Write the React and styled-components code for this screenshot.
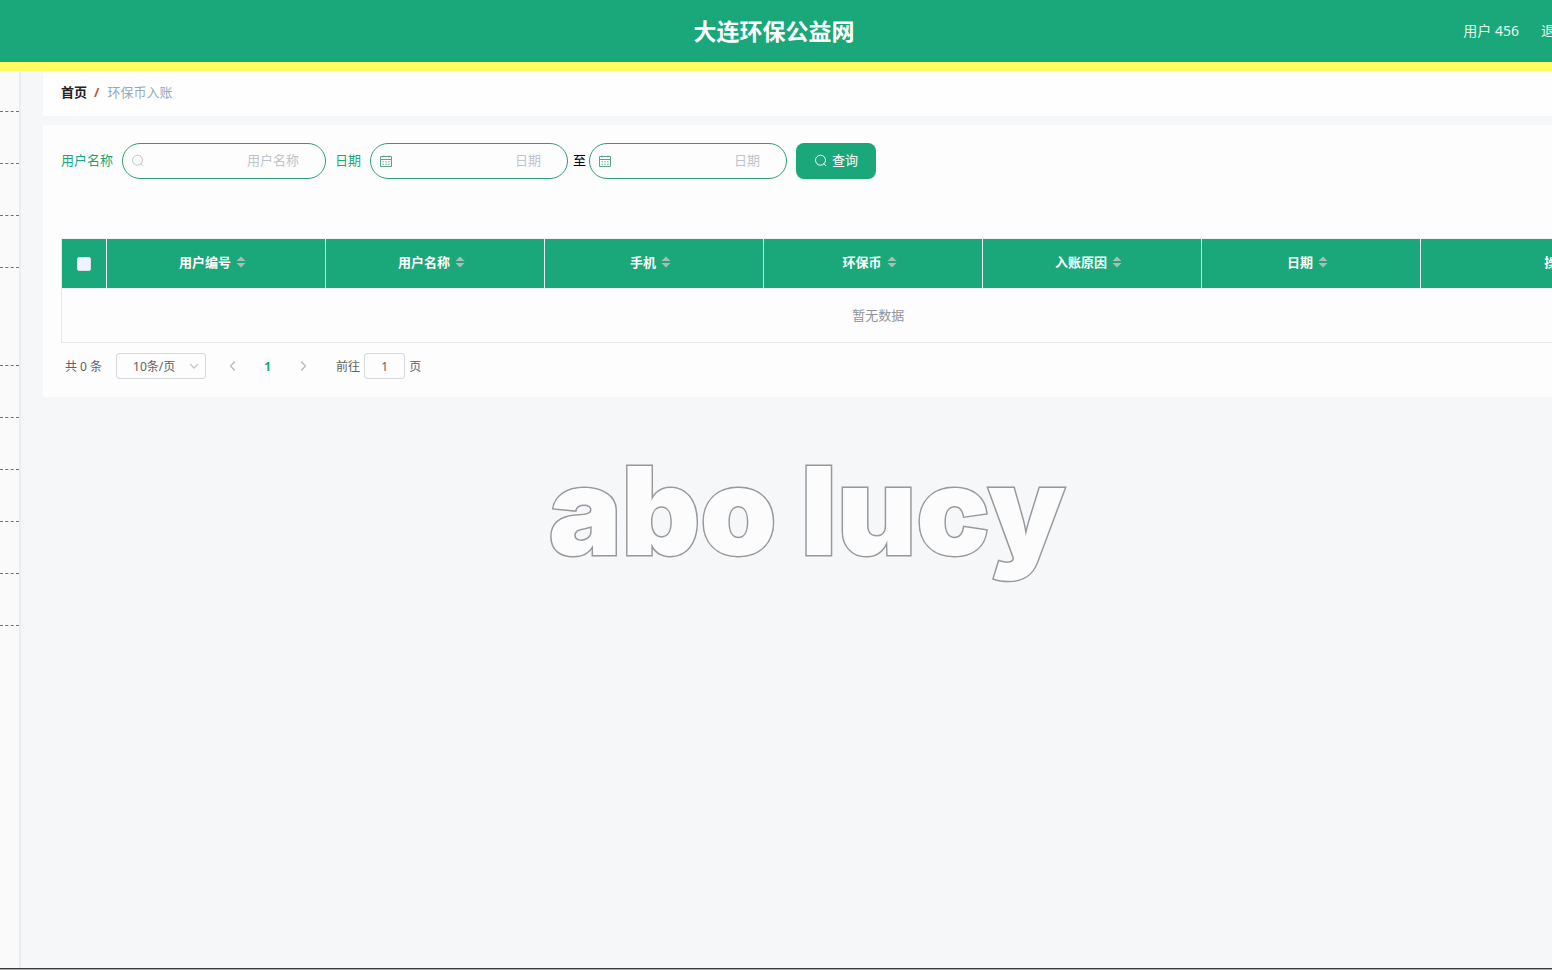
import React, { useState } from "react";
import styled, { createGlobalStyle } from "styled-components";

const columns = ["用户编号", "用户名称", "手机", "环保币", "入账原因", "日期"];
const menuGroups = [
  { id: "home" },
  { id: "profile" },
  { id: "users" },
  { id: "coins" },
  { id: "records", tall: true },
  { id: "goods" },
  { id: "orders" },
  { id: "news" },
  { id: "forum" },
  { id: "system" }
];

function SearchIcon() {
  return (
    <svg width="14" height="14" viewBox="0 0 14 14" fill="none" stroke="currentColor">
      <circle cx="6.5" cy="6.2" r="5" />
      <path d="M10 9.8 L12 11.8" strokeLinecap="round" />
    </svg>
  );
}

function CalendarIcon() {
  return (
    <svg width="14" height="14" viewBox="0 0 14 14" fill="none" stroke="currentColor">
      <path d="M1.5 2.5h11v10h-11z M1.5 5.5h11" />
      <path d="M4 1.5v2 M10 1.5v2" />
      <path d="M3.5 7.8h7 M3.5 10.3h7" strokeDasharray="1.4 1.4" />
    </svg>
  );
}

function Chevron({ d }) {
  return (
    <svg width="12" height="12" viewBox="0 0 12 12" fill="none" stroke="currentColor">
      <path d={d} strokeLinecap="round" strokeLinejoin="round" strokeWidth="1.2" />
    </svg>
  );
}

function SortCaret() {
  return (
    <Caret>
      <svg width="10" height="12" viewBox="0 0 10 12" fill="currentColor">
        <path d="M5 0.5 L9.5 5 H0.5z M5 11.5 L9.5 7 H0.5z" />
      </svg>
    </Caret>
  );
}

export default function App() {
  const [name, setName] = useState("");
  const [from, setFrom] = useState("");
  const [to, setTo] = useState("");
  const [page, setPage] = useState("1");

  return (
    <Page>
      <GlobalStyle />
      <Header>
        <Title>大连环保公益网</Title>
        <UserNav>
          <span>用户 456</span>
          <LogoutLink href="#logout">退出登录</LogoutLink>
        </UserNav>
      </Header>
      <Body>
        <Sidebar>
          {menuGroups.map(({ id, tall }, i) => (
            <MenuSlot key={id} $first={i === 0} $tall={tall} />
          ))}
        </Sidebar>
        <Main>
          <Breadcrumb>
            <HomeLink href="#home">首页</HomeLink>
            <Slash>/</Slash>
            <Current>环保币入账</Current>
          </Breadcrumb>
          <Card>
            <Filters onSubmit={e => e.preventDefault()}>
              <Label htmlFor="name">用户名称</Label>
              <Field $width="204px">
                <SearchIcon />
                <FieldInput
                  id="name"
                  placeholder="用户名称"
                  value={name}
                  onChange={e => setName(e.target.value)}
                />
              </Field>
              <Label htmlFor="from">日期</Label>
              <Field $width="198px" $accent="#5aa587">
                <CalendarIcon />
                <FieldInput
                  id="from"
                  placeholder="日期"
                  value={from}
                  onChange={e => setFrom(e.target.value)}
                />
              </Field>
              <RangeLabel htmlFor="to">至</RangeLabel>
              <Field $width="198px" $accent="#5aa587">
                <CalendarIcon />
                <FieldInput
                  id="to"
                  placeholder="日期"
                  value={to}
                  onChange={e => setTo(e.target.value)}
                />
              </Field>
              <QueryButton type="submit">
                <SearchIcon />
                <ButtonText>查询</ButtonText>
              </QueryButton>
            </Filters>
            <Table>
              <colgroup>
                <Col $width="45px" />
                {columns.map(label => (
                  <Col key={label} $width="219px" />
                ))}
                <Col />
              </colgroup>
              <thead>
                <tr>
                  <Th>
                    <Checkbox type="checkbox" aria-label="全选" />
                  </Th>
                  {columns.map(label => (
                    <Th key={label}>
                      <ThContent>
                        {label}
                        <SortCaret />
                      </ThContent>
                    </Th>
                  ))}
                  <Th>
                    <ThContent>操作</ThContent>
                  </Th>
                </tr>
              </thead>
              <tbody>
                <tr>
                  <Empty colSpan={columns.length + 2}>暂无数据</Empty>
                </tr>
              </tbody>
            </Table>
            <Pagination>
              <span>共 0 条</span>
              <SizeBox>
                <SizeSelect aria-label="每页条数" defaultValue="10">
                  <option value="10">10条/页</option>
                  <option value="20">20条/页</option>
                  <option value="50">50条/页</option>
                </SizeSelect>
                <Chevron d="M2.5 4.5 L6 8 L9.5 4.5" />
              </SizeBox>
              <Pager>
                <PageButton aria-label="上一页" disabled>
                  <Chevron d="M7.5 2 L3.5 6 L7.5 10" />
                </PageButton>
                <PageButton $active>1</PageButton>
                <PageButton aria-label="下一页" disabled>
                  <Chevron d="M4.5 2 L8.5 6 L4.5 10" />
                </PageButton>
              </Pager>
              <Jump>
                前往
                <JumpInput value={page} onChange={e => setPage(e.target.value)} />
                页
              </Jump>
            </Pagination>
          </Card>
        </Main>
        <Watermark>abo lucy</Watermark>
      </Body>
      <BottomEdge />
    </Page>
  );
}

const green = "#1aa87a";

const GlobalStyle = createGlobalStyle`
  * {
    box-sizing: border-box;
  }
  body {
    margin: 0;
    overflow: hidden;
    background: #f5f7f9;
    color: #606266;
    font-family: "Noto Sans", "Noto Sans CJK SC", sans-serif;
    font-size: 13px;
  }
  input, select, button {
    font: inherit;
    margin: 0;
  }
  svg {
    display: block;
    flex: none;
  }
`;
const Page = styled.div`
  display: flex;
  flex-direction: column;
  height: 100vh;
`;
const Header = styled.header`
  display: grid;
  grid-template-columns: 1fr auto 1fr;
  align-items: center;
  flex: none;
  height: 71px;
  padding-right: 4px;
  background: ${green};
  border-bottom: 9px solid #fffd62;
  color: #fff;
`;
const Title = styled.h1`
  grid-column: 2;
  margin: 0;
  font-size: 23px;
  line-height: 32px;
  font-weight: 700;
`;
const UserNav = styled.nav`
  display: flex;
  justify-content: flex-end;
  gap: 22px;
  margin-right: -49px;
  font-size: 14px;
  line-height: 20px;
  color: #e6f6f0;
  white-space: nowrap;
`;
const LogoutLink = styled.a`
  color: inherit;
  text-decoration: none;
`;
const Body = styled.div`
  display: flex;
  flex: 1;
  min-height: 0;
  position: relative;
  overflow: hidden;
`;
const Sidebar = styled.aside`
  flex: none;
  width: 21px;
  background: #fafafa;
  border-right: 2px solid #eceeee;
`;
const MenuSlot = styled.div`
  height: ${props => (props.$first ? "41px" : props.$tall ? "98px" : "52px")};
  border-bottom: 1px dashed #2f9270;
`;
/* wider than the window, the last table column runs off the right side */
const Main = styled.main`
  flex: none;
  width: 109%;
  padding-left: 22px;
`;
const Breadcrumb = styled.nav`
  display: flex;
  align-items: center;
  height: 45px;
  margin-bottom: 9px;
  padding: 0 18px 4px;
  background: #fefefe;
`;
const HomeLink = styled.a`
  color: #222;
  font-weight: 700;
  text-decoration: none;
`;
const Slash = styled.span`
  margin: 0 8px 0 7px;
  color: #c4572f;
  font-weight: 700;
`;
const Current = styled.span`
  color: #97a8be;
`;
const Card = styled.section`
  padding: 18px;
  background: #fdfdfd;
`;
const Filters = styled.form`
  display: flex;
  align-items: center;
  margin-bottom: 59px;
`;
const Label = styled.label`
  margin-right: 9px;
  padding-bottom: 3px;
  color: ${green};
`;
const RangeLabel = styled.label`
  margin-left: -4px;
  margin-right: 3px;
  padding-bottom: 3px;
  color: #000;
`;
const Field = styled.div`
  display: flex;
  align-items: center;
  width: ${props => props.$width};
  height: 36px;
  margin-right: 9px;
  padding: 0 26px 0 8px;
  border: 1px solid #2e9c76;
  border-radius: 18px;
  color: ${props => props.$accent || "#c0c4cc"};
`;
const FieldInput = styled.input`
  flex: 1;
  min-width: 0;
  padding: 0 0 3px;
  border: 0;
  outline: none;
  background: none;
  text-align: right;
  color: #606266;
  &::placeholder {
    color: #c0c4cc;
  }
`;
const QueryButton = styled.button`
  display: flex;
  align-items: center;
  justify-content: center;
  gap: 4px;
  width: 80px;
  height: 36px;
  padding: 0;
  border: 0;
  border-radius: 8px;
  background: ${green};
  color: #fff;
`;
const ButtonText = styled.span`
  padding-bottom: 3px;
`;
const Table = styled.table`
  width: 100%;
  table-layout: fixed;
  border-spacing: 0;
  border-top: 1px solid #ebeef5;
  border-left: 1px solid #e6e9ec;
`;
const Col = styled.col`
  width: ${props => props.$width || "auto"};
`;
const Th = styled.th`
  height: 50px;
  padding: 0;
  background: ${green};
  border-right: 1px solid #ebeef5;
  border-bottom: 1px solid #ebeef5;
  color: #fff;
  font-weight: 700;
  text-align: center;
`;
const ThContent = styled.div`
  display: flex;
  align-items: center;
  justify-content: center;
  padding-bottom: 4px;
`;
const Caret = styled.span`
  width: 22px;
  padding-left: 5px;
  color: #a9bdb3;
`;
const Checkbox = styled.input`
  appearance: none;
  display: block;
  width: 14px;
  height: 14px;
  margin: 0 auto;
  border: 1px solid #dcdfe6;
  border-radius: 2px;
  background: #f0f3fd;
`;
const Empty = styled.td`
  height: 54px;
  padding: 0 0 3px;
  border-bottom: 1px solid #e6e9ec;
  color: #909399;
  text-align: center;
`;
const Pagination = styled.div`
  display: flex;
  align-items: center;
  margin-top: 10px;
  padding-left: 4px;
  font-size: 12px;
`;
const SizeBox = styled.div`
  display: flex;
  align-items: center;
  width: 90px;
  height: 26px;
  margin-left: 14px;
  padding-right: 5px;
  border: 1px solid #d5d8dd;
  border-radius: 3px;
  color: #c0c4cc;
`;
const SizeSelect = styled.select`
  appearance: none;
  flex: 1;
  min-width: 0;
  padding: 0 0 0 16px;
  border: 0;
  outline: none;
  background: none;
  color: #606266;
`;
const Pager = styled.div`
  display: flex;
  margin: 0 16px 0 9px;
`;
const PageButton = styled.button`
  display: flex;
  align-items: center;
  justify-content: center;
  width: 35px;
  height: 26px;
  padding: 0;
  border: 0;
  background: none;
  color: ${props => (props.$active ? green : "#b4b8bf")};
  font-weight: 700;
`;
const Jump = styled.label`
  display: flex;
  align-items: center;
  gap: 4px;
`;
const JumpInput = styled.input`
  width: 41px;
  height: 26px;
  padding: 0;
  border: 1px solid #d5d8dd;
  border-radius: 3px;
  outline: none;
  background: none;
  color: #606266;
  text-align: center;
`;
const Watermark = styled.div`
  position: absolute;
  left: 52%;
  top: 49%;
  transform: translate(-50%, -50%);
  color: #fcfcfd;
  font-family: Inter, "Liberation Sans", sans-serif;
  font-size: 122px;
  line-height: 140px;
  font-weight: 900;
  white-space: nowrap;
  paint-order: stroke fill;
  -webkit-text-stroke: 3px #97999c;
  pointer-events: none;
`;
const BottomEdge = styled.div`
  flex: none;
  height: 2px;
  background: #a8a8a8;
  border-top: 1px solid #3c3c40;
`;
